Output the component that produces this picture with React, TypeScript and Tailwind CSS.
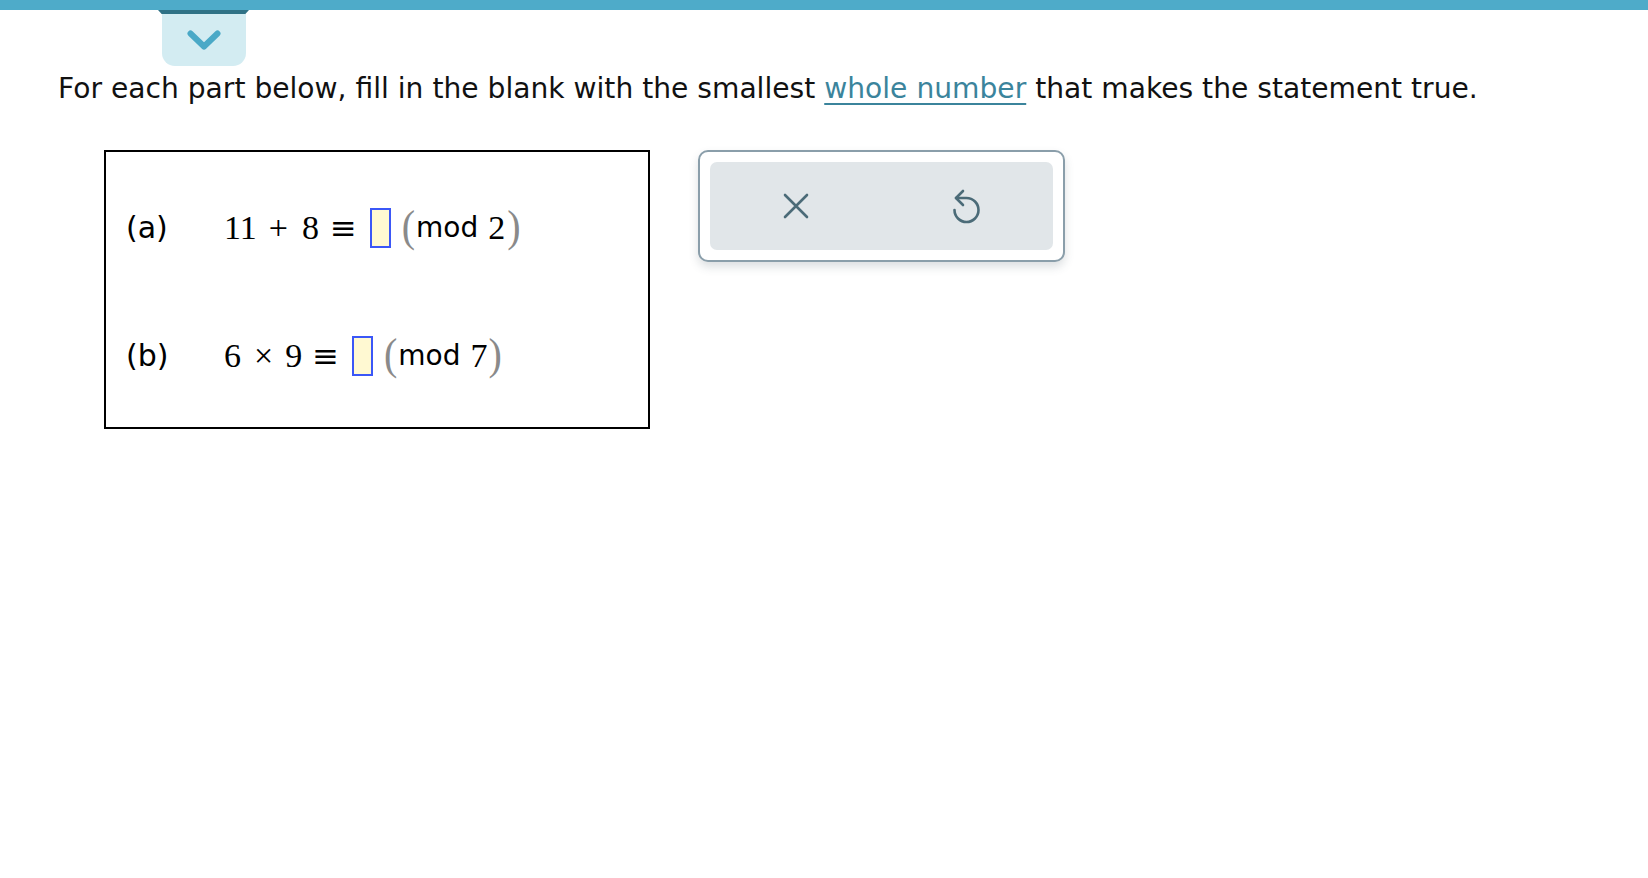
import React from "react";

function AnswerBox() {
  return <span className="inline-block w-[21px] h-[40px] bg-[#fff9d2] border-2 border-[#3b57f7]" />;
}

function Paren({ c }: { c: string }) {
  return (
    <span className="inline-block font-['Liberation_Serif','DejaVu_Serif',serif] text-[40px] leading-none text-[#8a8a8a] scale-y-110 -translate-y-[1px]">
      {c}
    </span>
  );
}

function Row({ label, children }: { label: string; children: React.ReactNode }) {
  return (
    <div className="flex items-center h-[44px] pl-[20px]">
      <span className="w-[98px] text-[30px] leading-none text-black">{label}</span>
      <div className="flex items-center">{children}</div>
    </div>
  );
}

const serif = "font-['Liberation_Serif','DejaVu_Serif',serif] text-[34px] leading-none text-black";
const equiv = "font-['DejaVu_Serif','Liberation_Serif',serif] text-[32px] leading-none text-black";

export default function App() {
  return (
    <div className="min-h-[878px] w-full bg-white font-['DejaVu_Sans','Liberation_Sans',sans-serif]">
      <div className="h-[10px] bg-[#4eabc9]" />
      <div className="ml-[158px] w-[91px]">
        <div className="h-[4px] bg-[#2f7286] [clip-path:polygon(0_0,100%_0,96%_100%,4%_100%)]" />
        <div className="ml-[4px] w-[84px] h-[52px] rounded-b-[13px] bg-[#d3ecf2] flex justify-center pt-[16px]">
          <svg width="34" height="21" viewBox="0 0 34 21">
            <polyline points="3.5,3.5 17,16.5 30.5,3.5" fill="none" stroke="#4aa9c7" strokeWidth="6" strokeLinecap="round" strokeLinejoin="round" />
          </svg>
        </div>
      </div>
      <p className="ml-[58px] mt-[7px] text-[28.15px] leading-[32px] text-[#111]">
        For each part below, fill in the blank with the smallest{" "}
        <span className="text-[#3b849c] underline underline-offset-[5px] decoration-[2px]">whole number</span> that makes
        the statement true.
      </p>
      <div className="flex items-start ml-[104px] mt-[45px]">
        <div className="w-[546px] h-[279px] border-2 border-black flex flex-col pt-[54px]">
          <Row label="(a)">
            <span className={serif}>11</span>
            <span className={serif + " ml-[12px]"}>+</span>
            <span className={serif + " ml-[14px]"}>8</span>
            <span className={equiv + " ml-[11px]"}>≡</span>
            <span className="ml-[13px] flex"><AnswerBox /></span>
            <span className="ml-[11px]"><Paren c="(" /></span>
            <span className="ml-[1px] text-[28px] leading-none text-black">mod</span>
            <span className={serif + " ml-[10px]"}>2</span>
            <span className="ml-[2px]"><Paren c=")" /></span>
          </Row>
          <div className="h-[84px]" />
          <Row label="(b)">
            <span className={serif}>6</span>
            <span className={serif + " ml-[13px]"}>×</span>
            <span className={serif + " ml-[12px]"}>9</span>
            <span className={equiv + " ml-[10px]"}>≡</span>
            <span className="ml-[13px] flex"><AnswerBox /></span>
            <span className="ml-[11px]"><Paren c="(" /></span>
            <span className="ml-[1px] text-[28px] leading-none text-black">mod</span>
            <span className={serif + " ml-[10px]"}>7</span>
            <span className="ml-[1px]"><Paren c=")" /></span>
          </Row>
        </div>
        <div className="ml-[48px] w-[367px] h-[112px] border-2 border-[#8a9eaa] rounded-[10px] p-[10px] shadow-[0_5px_10px_rgba(60,80,90,0.18)] bg-white">
          <div className="h-full w-full rounded-[7px] bg-[#e1e6e9] flex">
            <div className="flex-1 flex items-center justify-center">
              <svg width="26" height="26" viewBox="0 0 26 26">
                <path d="M2 2 L24 24 M24 2 L2 24" stroke="#4b6b78" strokeWidth="2.6" strokeLinecap="round" fill="none" />
              </svg>
            </div>
            <div className="flex-1 flex items-center justify-center pt-[2px]">
              <svg width="30" height="38" viewBox="0 0 30 38">
                <path d="M11 3 L4 10 L11 17" stroke="#4b6b78" strokeWidth="2.6" strokeLinecap="round" strokeLinejoin="round" fill="none" />
                <path d="M4 10 H14.5 A12 12 0 1 1 2.5 22" stroke="#4b6b78" strokeWidth="2.6" strokeLinecap="round" strokeLinejoin="round" fill="none" />
              </svg>
            </div>
          </div>
        </div>
      </div>
    </div>
  );
}
